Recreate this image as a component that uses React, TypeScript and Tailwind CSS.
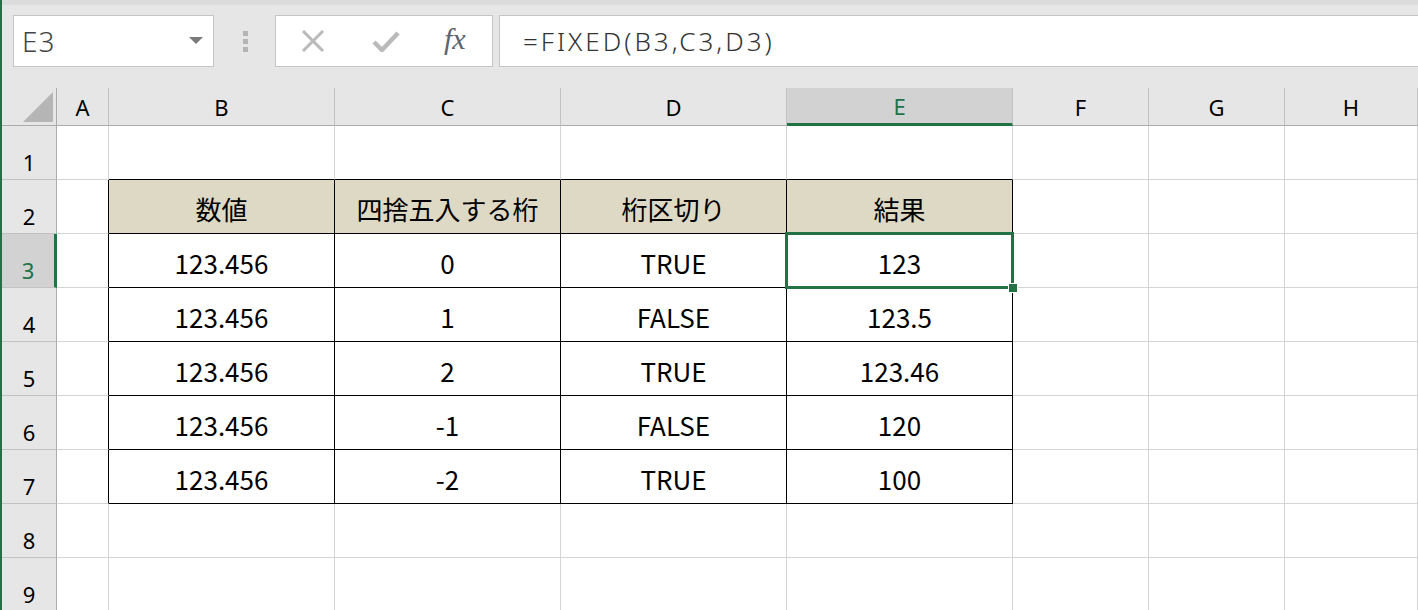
import React from 'react';

const COLS = ['A', 'B', 'C', 'D', 'E', 'F', 'G', 'H'];
const ROWS = [1, 2, 3, 4, 5, 6, 7, 8, 9];

// table values keyed by "row:col"
const DATA: Record<string, string> = {
    '2:B': '数値', '2:C': '四捨五入する桁', '2:D': '桁区切り', '2:E': '結果',
    '3:B': '123.456', '3:C': '0', '3:D': 'TRUE', '3:E': '123',
    '4:B': '123.456', '4:C': '1', '4:D': 'FALSE', '4:E': '123.5',
    '5:B': '123.456', '5:C': '2', '5:D': 'TRUE', '5:E': '123.46',
    '6:B': '123.456', '6:C': '-1', '6:D': 'FALSE', '6:E': '120',
    '7:B': '123.456', '7:C': '-2', '7:D': 'TRUE', '7:E': '100',
};

const inTable = (r: number, c: string) => r >= 2 && r <= 7 && 'BCDE'.includes(c);

const Cell: React.FC<{ r: number; c: string }> = ({ r, c }) => {
    const blackRight = r >= 2 && r <= 7 && 'ABCDE'.includes(c);
    const blackBottom = r >= 1 && r <= 7 && 'BCDE'.includes(c);
    const selected = r === 3 && c === 'E';
    return (
        <div
            className={`relative flex items-center justify-center border-r border-b text-[26px] text-black ${blackRight ? 'border-r-black' : 'border-r-[#d4d4d4]'} ${blackBottom ? 'border-b-black' : 'border-b-[#d4d4d4]'} ${r === 2 && inTable(r, c) ? 'bg-[#ddd9c4]' : 'bg-white'} ${selected ? 'z-10' : ''}`}
            style={{ fontFamily: '"Noto Sans CJK JP", sans-serif' }}
        >
            <span className="pt-[3px]">{DATA[`${r}:${c}`] ?? ''}</span>
            {selected && (
                <>
                    <div className="absolute -left-[2px] -top-[2px] -right-[2px] -bottom-[2px] border-[3px] border-[#217346]" />
                    <div className="absolute -right-[6px] -bottom-[6px] w-[10px] h-[10px] bg-[#217346] border border-white" />
                </>
            )}
        </div>
    );
};

export default function App() {
    return (
        <div className="w-[1418px] h-[610px] overflow-hidden bg-[#e6e6e6] border-l-2 border-[#217346] flex flex-col" style={{ fontFamily: '"Noto Sans", sans-serif' }}>
            {/* formula bar */}
            <div className="h-[88px] shrink-0">
                <div className="h-[5px] bg-[#dcdcdc]" />
                <div className="flex items-start pt-[10px]">
                    <div className="ml-[11px] w-[201px] h-[52px] bg-white border border-[#c6c6c6] flex items-center justify-between pl-[8px] pr-[10px]">
                        <span className="text-[28px] font-light text-[#444] tracking-[1px] leading-none">E3</span>
                        <svg width="14" height="8" viewBox="0 0 14 8"><polygon points="0,0 14,0 7,7" fill="#7a7a7a" /></svg>
                    </div>
                    <div className="ml-[29px] mt-[16px] flex flex-col gap-[3px]">
                        <div className="w-[5px] h-[5px] bg-[#b4b4b4]" />
                        <div className="w-[5px] h-[5px] bg-[#b4b4b4]" />
                        <div className="w-[5px] h-[5px] bg-[#b4b4b4]" />
                    </div>
                    <div className="ml-[27px] w-[218px] h-[52px] bg-white border border-[#c6c6c6] flex items-center pl-[25px]">
                        <svg width="24" height="22" viewBox="0 0 24 22">
                            <path d="M2 1 L22 21 M22 1 L2 21" stroke="#bababa" strokeWidth="3" />
                        </svg>
                        <svg width="28" height="22" viewBox="0 0 28 22" className="ml-[47px]">
                            <path d="M2 12 L10 20 L26 3" stroke="#bababa" strokeWidth="4.5" fill="none" />
                        </svg>
                        <span className="ml-[44px] text-[30px] italic text-[#5a6370] leading-none pb-[4px]" style={{ fontFamily: '"Liberation Serif", serif' }}>fx</span>
                    </div>
                    <div className="ml-[6px] flex-1 h-[52px] bg-white border border-[#c6c6c6] border-r-0 flex items-center pl-[23px]">
                        <span className="text-[26px] font-light text-[#333] tracking-[3px] leading-none">=FIXED(B3,C3,D3)</span>
                    </div>
                </div>
            </div>

            {/* sheet */}
            <div className="grid grid-cols-[55px_52px_226px_226px_226px_226px_136px_136px_133px] grid-rows-[38px_repeat(9,54px)]">
                <div className="relative border-r border-b border-r-[#ababab] border-b-[#ababab] bg-[#e6e6e6]">
                    <svg width="30" height="30" viewBox="0 0 30 30" className="absolute right-[3px] bottom-[3px]">
                        <polygon points="30,0 30,30 0,30" fill="#b5b5b5" />
                    </svg>
                </div>
                {COLS.map(c => (
                    <div
                        key={c}
                        className={`flex items-center justify-center text-[22px] border-r border-r-[#c2c2c2] ${c === 'E' ? 'bg-[#d2d2d2] text-[#217346] border-b-[3px] border-b-[#217346]' : 'bg-[#e6e6e6] text-black border-b border-b-[#ababab]'}`}
                    >
                        <span className="pt-[2px]">{c}</span>
                    </div>
                ))}
                {ROWS.map(r => (
                    <React.Fragment key={r}>
                        <div
                            className={`flex items-center justify-center text-[22px] border-b border-b-[#c2c2c2] ${r === 3 ? 'bg-[#d2d2d2] text-[#217346] border-r-[3px] border-r-[#217346]' : 'bg-[#e6e6e6] text-black border-r border-r-[#ababab]'}`}
                        >
                            <span className="pt-[20px]">{r}</span>
                        </div>
                        {COLS.map(c => <Cell key={c} r={r} c={c} />)}
                    </React.Fragment>
                ))}
            </div>
        </div>
    );
}
